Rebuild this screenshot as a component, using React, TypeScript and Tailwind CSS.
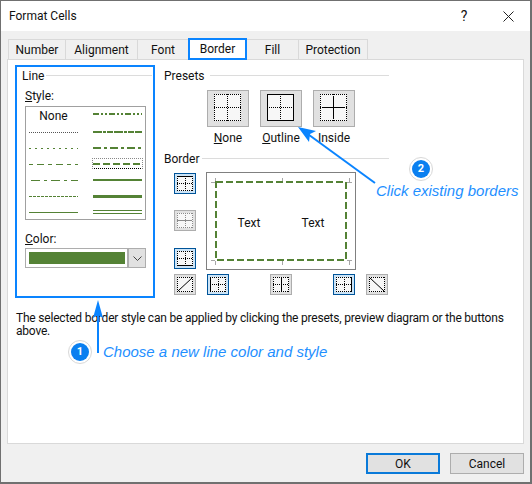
const GREEN = "#548235";

function CellIcon({ w, h, solid, muted }: { w: number; h: number; solid?: string; muted?: boolean }) {
  const ink = muted ? "#8a8a8a" : "#000";
  const x2 = w - 0.5;
  const y2 = h - 0.5;
  const cx = Math.floor(w / 2) + 0.5;
  const cy = Math.floor(h / 2) + 0.5;
  const dot = { stroke: ink, strokeWidth: 1, strokeDasharray: "1 1" };
  const s = { stroke: ink, strokeWidth: 1, fill: "none" };
  const diag = solid === "diagUp" || solid === "diagDown";
  return (
    <svg width={w} height={h} viewBox={`0 0 ${w} ${h}`} className="block">
      <rect x="0" y="0" width={w} height={h} fill="#f7f7f7" />
      <line x1="0" y1="0.5" x2={w} y2="0.5" {...dot} />
      <line x1="0" y1={y2} x2={w} y2={y2} {...dot} />
      <line x1="0.5" y1="0" x2="0.5" y2={h} {...dot} />
      <line x1={x2} y1="0" x2={x2} y2={h} {...dot} />
      {!diag && <line x1={cx} y1="0" x2={cx} y2={h} {...dot} />}
      {!diag && <line x1="0" y1={cy} x2={w} y2={cy} {...dot} />}
      {solid === "outline" && <rect x="0.5" y="0.5" width={w - 1} height={h - 1} {...s} />}
      {solid === "inside" && (
        <>
          <line x1={cx} y1="2" x2={cx} y2={h - 2} {...s} />
          <line x1="2" y1={cy} x2={w - 2} y2={cy} {...s} />
        </>
      )}
      {solid === "top" && <line x1="0" y1="0.5" x2={w} y2="0.5" {...s} />}
      {solid === "bottom" && <line x1="0" y1={y2} x2={w} y2={y2} {...s} />}
      {solid === "left" && <line x1="0.5" y1="0" x2="0.5" y2={h} {...s} />}
      {solid === "right" && <line x1={x2} y1="0" x2={x2} y2={h} {...s} />}
      {solid === "h" && <line x1="1" y1={cy} x2={w - 1} y2={cy} {...s} />}
      {solid === "v" && <line x1={cx} y1="1" x2={cx} y2={h - 1} {...s} />}
      {solid === "diagUp" && <line x1="1" y1={h - 1} x2={w - 1} y2="1" {...s} />}
      {solid === "diagDown" && <line x1="1" y1="1" x2={w - 1} y2={h - 1} {...s} />}
    </svg>
  );
}

function BorderBtn({ solid, active, muted }: { solid: string; active?: boolean; muted?: boolean }) {
  return (
    <div
      className={
        active
          ? "w-[22px] h-[21px] shrink-0 flex items-center justify-center border border-[#005499] bg-[#cce4f7]"
          : "w-[22px] h-[21px] shrink-0 flex items-center justify-center border border-[#adadad] bg-[#e1e1e1]"
      }
    >
      <CellIcon w={16} h={15} solid={solid} muted={muted} />
    </div>
  );
}

function Preset({ solid, label, u }: { solid?: string; label: string; u: string }) {
  return (
    <div className="w-[42px] flex flex-col items-center">
      <div className="w-[42px] h-[37px] flex items-start justify-start pl-[6px] pt-[3px] border border-[#adadad] bg-[#e1e1e1]">
        <CellIcon w={27} h={27} solid={solid} />
      </div>
      <div className="mt-[3px] h-[16px] leading-[16px] whitespace-nowrap">
        <u>{u}</u>
        {label}
      </div>
    </div>
  );
}

function Sample({ dash, width = 1, color = GREEN, inset = 0 }: { dash?: string; width?: number; color?: string; inset?: number }) {
  const y = width % 2 === 0 ? 8 : 8.5;
  return (
    <svg width="49" height="16" viewBox="0 0 49 16" className="block">
      <line x1={inset} y1={y} x2="49" y2={y} stroke={color} strokeWidth={width} strokeDasharray={dash} />
    </svg>
  );
}

function GroupTitle({ title, gap }: { title: string; gap: number }) {
  return (
    <div className="h-[22px] flex items-center">
      <span className="leading-[16px]">{title}</span>
      <div className="flex-1 h-px bg-[#dcdcdc] -translate-y-px" style={{ marginLeft: gap }} />
    </div>
  );
}

export default function App() {
  return (
    <div className="relative w-[532px] h-[484px] flex flex-col bg-[#f0f0f0] border-t border-l border-r-2 border-b-2 border-[#707070] text-[12px] text-[#111] font-['Roboto',sans-serif] overflow-hidden">
      <div className="h-[30px] shrink-0 bg-white flex items-center pl-2 pr-[16px]">
        <span className="flex-1">Format Cells</span>
        <span className="w-[10px] text-center mr-[34px] text-[14px]">?</span>
        <svg width="11" height="11" viewBox="0 0 11 11">
          <path d="M0.5 0.5 L10.5 10.5 M10.5 0.5 L0.5 10.5" stroke="#222" strokeWidth="1" fill="none" />
        </svg>
      </div>

      <div className="h-[28px] shrink-0 pl-[7px] flex items-end">
        <div className="w-[57px] h-[20px] flex items-center justify-center border-t border-l border-[#d9d9d9]">Number</div>
        <div className="w-[72px] h-[20px] flex items-center justify-center border-t border-l border-[#d9d9d9]">Alignment</div>
        <div className="w-[51px] h-[20px] flex items-center justify-center border-t border-l border-[#d9d9d9]">Font</div>
        <div className="w-[59px] h-[22px] flex items-center justify-center border-2 border-[#0a84ff] bg-white relative z-10 -mb-px">Border</div>
        <div className="w-[51px] h-[20px] flex items-center justify-center border-t border-[#d9d9d9]">Fill</div>
        <div className="w-[70px] h-[20px] flex items-center justify-center border-t border-x border-[#d9d9d9]">Protection</div>
      </div>

      <div className="ml-[6px] w-[517px] h-[385px] shrink-0 bg-white border border-[#d9d9d9] flex flex-col">
        <div className="flex pl-[7px] pt-[5px]">
          <div className="w-[140px] h-[233px] shrink-0 border-2 border-[#0a84ff] flex flex-col">
            <div className="h-[18px] flex items-center pl-[5px] pr-px">
              <span className="leading-[16px]">Line</span>
              <div className="flex-1 h-px bg-[#dcdcdc] ml-[2px] -translate-y-px" />
            </div>
            <div className="pl-2 mt-[3px] h-[16px] leading-[16px]">
              <u>S</u>tyle:
            </div>
            <div className="ml-2 mt-[2px] w-[121px] h-[114px] border border-[#a0a0a0] grid grid-cols-[49px_49px] grid-rows-[repeat(7,16px)] gap-x-[15px] pl-[3px] pt-[1px]">
              <div className="text-center leading-[16px]">None</div>
              <div className="-mt-[2px]">
                <Sample dash="6 2 2 2 2 2" width={2} />
              </div>
              <Sample dash="1 1" color="#555" />
              <Sample dash="9 1 3 1 6 1" width={2} />
              <Sample dash="2 4" />
              <Sample dash="8 3 3 3" width={2} />
              <Sample dash="4 4 7 4" />
              <div className="relative">
                <div className="absolute left-[-1px] right-[-1px] top-[2px] h-[11px] border border-dotted border-[#888] border-b-black" />
                <Sample dash="7 3" width={2} />
              </div>
              <Sample dash="9 4 3 4" inset={2} />
              <Sample width={2} />
              <Sample dash="3 1" />
              <Sample width={3} />
              <Sample />
              <svg width="49" height="16" viewBox="0 0 49 16" className="block">
                <line x1="0" y1="6.5" x2="49" y2="6.5" stroke={GREEN} />
                <line x1="0" y1="9.5" x2="49" y2="9.5" stroke={GREEN} />
              </svg>
            </div>
            <div className="pl-2 mt-[11px] h-[16px] leading-[16px]">
              <u>C</u>olor:
            </div>
            <div className="ml-2 mt-[1px] w-[121px] h-[20px] border border-[#adadad] flex">
              <div className="w-[96px] h-[12px] ml-[3px] mt-[3px] bg-[#548235]" />
              <div className="ml-auto w-[18px] h-[18px] bg-[#e1e1e1] border-l-2 border-[#adadad] flex items-center justify-center">
                <svg width="9" height="5" viewBox="0 0 9 5">
                  <path d="M0.5 0.5 L4.5 4.5 L8.5 0.5" stroke="#444" fill="none" />
                </svg>
              </div>
            </div>
          </div>

          <div className="ml-[9px] w-[225px] shrink-0 flex flex-col">
            <GroupTitle title="Presets" gap={5} />
            <div className="mt-[3px] ml-[43px] flex gap-[11px]">
              <Preset label="one" u="N" />
              <Preset label="utline" u="O" solid="outline" />
              <Preset label="Inside" u="" solid="inside" />
            </div>
            <div className="mt-[2px]">
              <GroupTitle title="Border" gap={3} />
            </div>
            <div className="mt-[2px] ml-[10px] grid grid-cols-[22px_150px] gap-x-[10px] gap-y-[4px]">
              <div className="h-[98px] pt-px flex flex-col">
                <BorderBtn solid="top" active />
                <div className="mt-[16px]">
                  <BorderBtn solid="h" muted />
                </div>
                <div className="mt-[17px]">
                  <BorderBtn solid="bottom" active />
                </div>
              </div>
              <div className="relative h-[98px] border border-[#808080] flex items-center">
                <svg width="150" height="98" viewBox="0 0 150 98" className="absolute left-[-1px] top-[-1px]">
                  <g stroke="#a6a6a6" fill="none">
                    <path d="M5 10.5 H9 M9.5 6 V10 M76.5 6 V10 M143.5 6 V10 M141 10.5 H146 M5 88.5 H9 M9.5 89 V93 M76.5 89 V93 M143.5 89 V93 M141 88.5 H146" />
                  </g>
                  <rect x="10" y="10" width="130" height="78" fill="none" stroke={GREEN} strokeWidth="2" strokeDasharray="7 3" />
                </svg>
                <div className="relative w-full grid grid-cols-2 translate-y-[2px]">
                  <span className="text-center pl-[10px]">Text</span>
                  <span className="text-center pr-[10px]">Text</span>
                </div>
              </div>
              <BorderBtn solid="diagUp" />
              <div className="flex pl-px">
                <BorderBtn solid="left" active />
                <div className="ml-[41px]">
                  <BorderBtn solid="v" />
                </div>
                <div className="ml-[41px]">
                  <BorderBtn solid="right" active />
                </div>
                <div className="ml-[11px]">
                  <BorderBtn solid="diagDown" />
                </div>
              </div>
            </div>
          </div>
        </div>
        <p className="ml-[8px] mt-[14px] w-[500px] leading-[13px] tracking-[-0.2px]">
          The selected border style can be applied by clicking the presets, preview diagram or the buttons
          <br />
          above.
        </p>
      </div>

      <div className="mt-[9px] mr-[6px] flex justify-end gap-[10px]">
        <div className="w-[74px] h-[21px] flex items-center justify-center bg-[#e1e1e1] border-2 border-[#0a7ad9]">OK</div>
        <div className="w-[74px] h-[21px] flex items-center justify-center bg-[#e1e1e1] border border-[#adadad]">Cancel</div>
      </div>

      <svg width="532" height="484" viewBox="0 0 532 484" className="absolute left-[-1px] top-[-1px] pointer-events-none">
        <g stroke="#0a84ff" fill="none" strokeWidth="2">
          <line x1="98" y1="353" x2="98" y2="312" />
          <line x1="375" y1="183" x2="305" y2="132" />
        </g>
        <g fill="#0a84ff">
          <path d="M98 300 L103 318 L98 315 L93 318 Z" />
          <path d="M298 127 L316 131 L310 134 L309 142 Z" />
        </g>
      </svg>

      <div className="absolute left-[67px] top-[339px] w-[24px] h-[24px] rounded-full bg-white border border-[#d8d8d8] flex items-center justify-center">
        <div className="w-[18px] h-[18px] rounded-full bg-[#0a7ff0] text-white font-bold text-[11px] leading-[18px] text-center">1</div>
      </div>
      <div className="absolute left-[408px] top-[156px] w-[24px] h-[24px] rounded-full bg-white border border-[#d8d8d8] flex items-center justify-center">
        <div className="w-[18px] h-[18px] rounded-full bg-[#0a7ff0] text-white font-bold text-[11px] leading-[18px] text-center">2</div>
      </div>
      <div className="absolute left-[102px] top-[342px] font-['Liberation_Sans',sans-serif] italic text-[15px] leading-[18px] text-[#1e8fff] whitespace-nowrap">
        Choose a new line color and style
      </div>
      <div className="absolute left-[375px] top-[181px] font-['Liberation_Sans',sans-serif] italic text-[15px] leading-[18px] text-[#1e8fff] whitespace-nowrap">
        Click existing borders
      </div>
    </div>
  );
}
